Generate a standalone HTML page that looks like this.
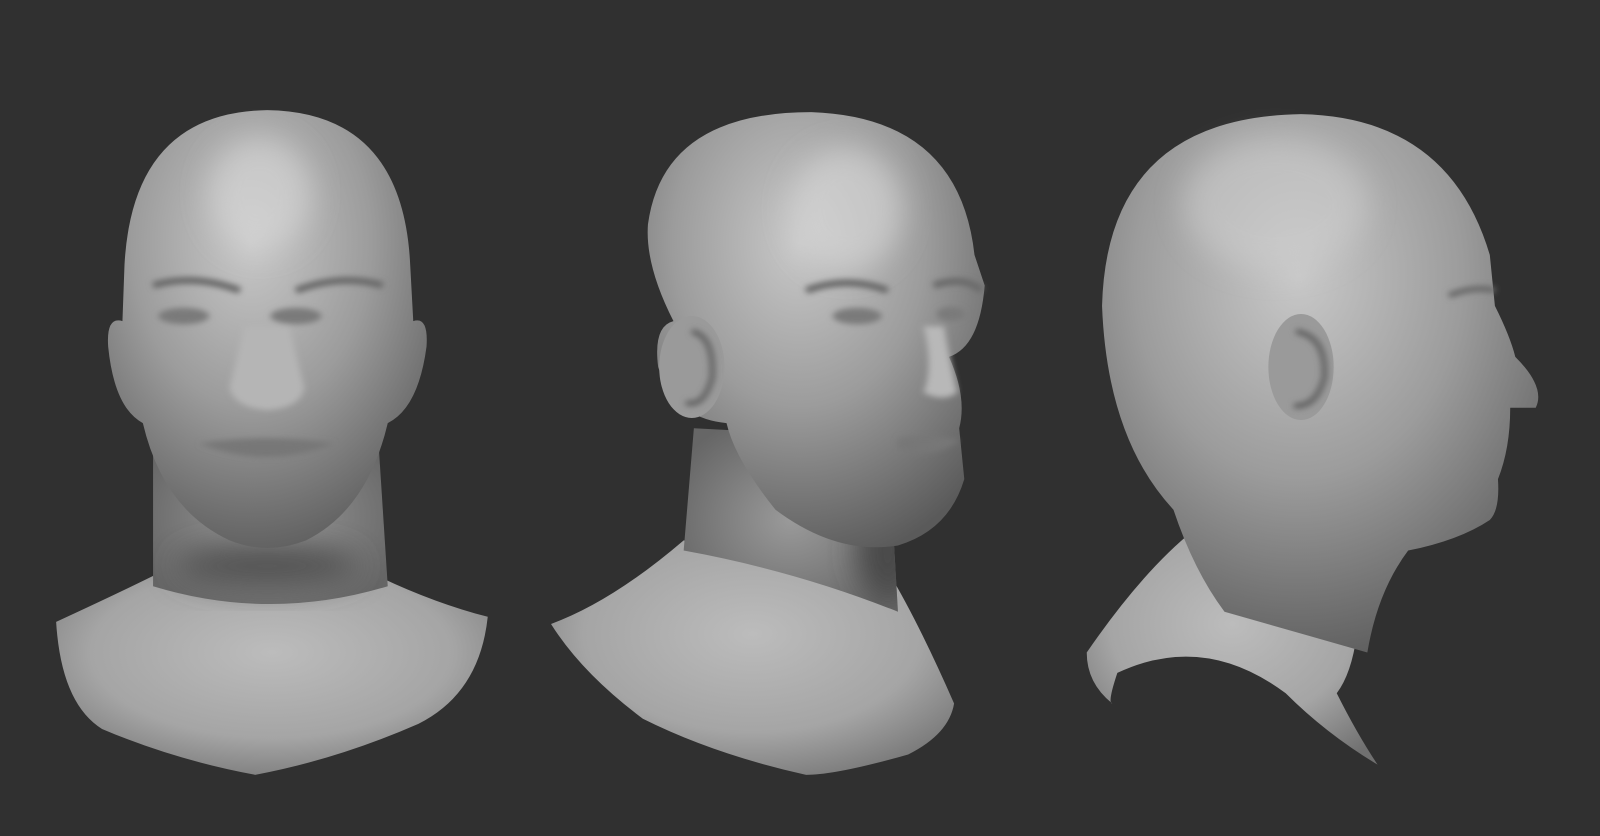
<!DOCTYPE html>
<html><head><meta charset="utf-8"><style>
html,body{margin:0;padding:0;background:#303030;overflow:hidden}
svg{display:block}
</style></head><body>
<svg width="1600" height="836" viewBox="0 0 1568 820" preserveAspectRatio="none" xmlns="http://www.w3.org/2000/svg">
<defs>
<radialGradient id="g1" cx="0.45" cy="0.3" r="0.75">
<stop offset="0" stop-color="#c8c8c8"/><stop offset="0.5" stop-color="#9c9c9c"/><stop offset="1" stop-color="#5a5a5a"/>
</radialGradient>
<radialGradient id="gb" cx="0.5" cy="0.4" r="0.7">
<stop offset="0" stop-color="#bcbcbc"/><stop offset="0.6" stop-color="#a5a5a5"/><stop offset="1" stop-color="#707070"/>
</radialGradient>
<radialGradient id="gn" cx="0.5" cy="0.5" r="0.6">
<stop offset="0" stop-color="#9a9a9a"/><stop offset="1" stop-color="#666"/>
</radialGradient>
<filter id="b8" x="-50%" y="-50%" width="200%" height="200%"><feGaussianBlur stdDeviation="14"/></filter>
<filter id="b3" x="-50%" y="-50%" width="200%" height="200%"><feGaussianBlur stdDeviation="3"/></filter>
<clipPath id="n2"><path d="M680,420 L870,430 L880,600 Q780,560 670,540Z"/></clipPath>
</defs>
<rect width="1568" height="820" fill="#303030"/>

<!-- Head 1 -->
<path d="M55,610 Q120,580 160,560 L360,560 Q420,590 478,605 Q470,680 410,710 Q330,745 250,760 Q170,745 100,715 Q60,690 55,610Z" fill="url(#gb)"/>
<path d="M150,420 L370,420 L380,575 Q265,610 150,575Z" fill="url(#gn)"/>
<ellipse cx="262" cy="555" rx="90" ry="22" fill="#555" filter="url(#b8)"/>
<path d="M262,108 Q395,110 402,260 L405,315 Q420,310 418,340 Q410,400 380,415 Q360,500 300,530 Q262,545 225,530 Q160,500 140,415 Q112,400 106,340 Q104,310 120,315 L122,260 Q130,110 262,108Z" fill="url(#g1)"/>
<ellipse cx="255" cy="190" rx="50" ry="55" fill="#d8d8d8" opacity="0.6" filter="url(#b8)"/>
<g filter="url(#b3)">
<path d="M150,280 Q190,268 235,285 M290,285 Q335,268 375,280" stroke="#6a6a6a" stroke-width="7" fill="none"/>
<ellipse cx="180" cy="310" rx="25" ry="8" fill="#7a7a7a"/><ellipse cx="290" cy="310" rx="25" ry="8" fill="#7a7a7a"/>
<path d="M240,320 L225,380 Q230,400 262,402 Q295,400 298,380 L283,320Z" fill="#b5b5b5"/>
<path d="M195,435 Q262,425 328,435 Q262,462 195,435Z" fill="#777"/>
</g>

<!-- Head 2 -->
<path d="M540,612 Q600,590 670,530 L870,560 Q900,610 935,690 Q930,720 890,740 Q820,760 790,760 Q700,740 630,705 Q570,660 540,612Z" fill="url(#gb)"/>
<path d="M680,420 L870,430 L880,600 Q780,560 670,540Z" fill="url(#gn)"/>
<g clip-path="url(#n2)"><ellipse cx="870" cy="540" rx="30" ry="50" fill="#4a4a4a" filter="url(#b8)"/></g>
<path d="M795,110 Q940,115 955,250 L965,280 Q960,340 930,350 Q948,390 940,420 L945,470 Q930,520 880,535 Q820,545 760,500 Q720,450 712,415 Q660,410 645,360 Q640,320 660,315 Q632,260 635,220 Q650,110 795,110Z" fill="url(#g1)"/>
<ellipse cx="678" cy="360" rx="32" ry="50" fill="#9a9a9a"/>
<ellipse cx="830" cy="205" rx="55" ry="60" fill="#d8d8d8" opacity="0.6" filter="url(#b8)"/>
<g filter="url(#b3)">
<path d="M678,325 Q700,330 698,370 Q690,400 672,395" stroke="#666" stroke-width="6" fill="none"/>
<path d="M790,285 Q830,270 870,285 M915,280 Q945,270 962,285" stroke="#6a6a6a" stroke-width="7" fill="none"/>
<ellipse cx="840" cy="310" rx="24" ry="8" fill="#7a7a7a"/><ellipse cx="932" cy="308" rx="14" ry="7" fill="#7a7a7a"/>
<path d="M905,320 Q915,360 905,385 Q925,395 938,385 Q930,350 925,320Z" fill="#b8b8b8"/>
<path d="M880,430 Q915,425 940,432 Q912,452 880,440Z" fill="#777"/>
</g>

<!-- Head 3 -->
<path d="M1065,640 Q1120,560 1170,520 L1330,520 Q1340,640 1310,680 Q1330,720 1350,750 Q1300,720 1260,680 Q1180,620 1095,660 Q1085,690 1090,690 Q1065,670 1065,640Z" fill="url(#gb)"/>
<path d="M1275,112 Q1420,115 1460,250 L1465,300 Q1480,330 1485,350 Q1515,380 1505,400 L1480,400 Q1480,440 1468,470 Q1470,500 1460,510 Q1430,530 1380,540 Q1350,580 1340,640 L1200,600 Q1170,560 1150,500 Q1085,430 1080,300 Q1085,115 1275,112Z" fill="url(#g1)"/>
<ellipse cx="1275" cy="360" rx="32" ry="52" fill="#9a9a9a"/>
<ellipse cx="1250" cy="200" rx="90" ry="65" fill="#d0d0d0" opacity="0.5" filter="url(#b8)"/>
<g filter="url(#b3)">
<path d="M1270,325 Q1300,330 1298,370 Q1290,400 1268,398" stroke="#666" stroke-width="6" fill="none"/>
<path d="M1420,290 Q1445,280 1465,285" stroke="#6a6a6a" stroke-width="6" fill="none"/>
</g>
</svg>
</body></html>
